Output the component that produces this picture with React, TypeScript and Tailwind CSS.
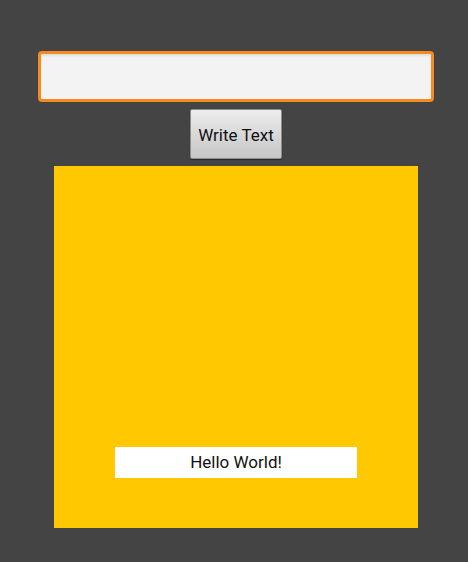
import React, { useState } from "react";

const App: React.FC = () => {
  const [value, setValue] = useState("");
  const [text, setText] = useState("Hello World!");

  return (
    <div
      className="min-h-[562px] w-full bg-[#444444] flex flex-col items-center pt-[51px] pl-[4px]"
      style={{ fontFamily: "Roboto, 'Liberation Sans', sans-serif" }}
    >
      {/* input field */}
      <input
        value={value}
        onChange={(e) => setValue(e.target.value)}
        className="w-[396px] h-[51px] rounded-[4px] border-[3px] border-[#f58a1f] bg-[#f3f3f3] shadow-[inset_0_2px_2px_rgba(0,0,0,0.08)] outline-none px-3 text-[17px] text-black"
      />

      <button
        onClick={() => value && setText(value)}
        className="mt-[7px] w-[92px] h-[50px] pt-[3px] rounded-[2px] border border-[#8e8e8e] bg-gradient-to-b from-[#ececec] to-[#c6c6c6] text-[17px] text-[#111111] shadow-[0_1px_1px_rgba(0,0,0,0.4)]"
      >
        Write Text
      </button>

      {/* canvas */}
      <div className="mt-[7px] w-[364px] h-[362px] bg-[#ffc800] flex flex-col items-center justify-end pb-[50px]">
        <div className="w-[242px] h-[31px] pt-[1px] bg-white flex items-center justify-center text-[17px] text-[#111111]">
          {text}
        </div>
      </div>
    </div>
  );
};

export default App;
